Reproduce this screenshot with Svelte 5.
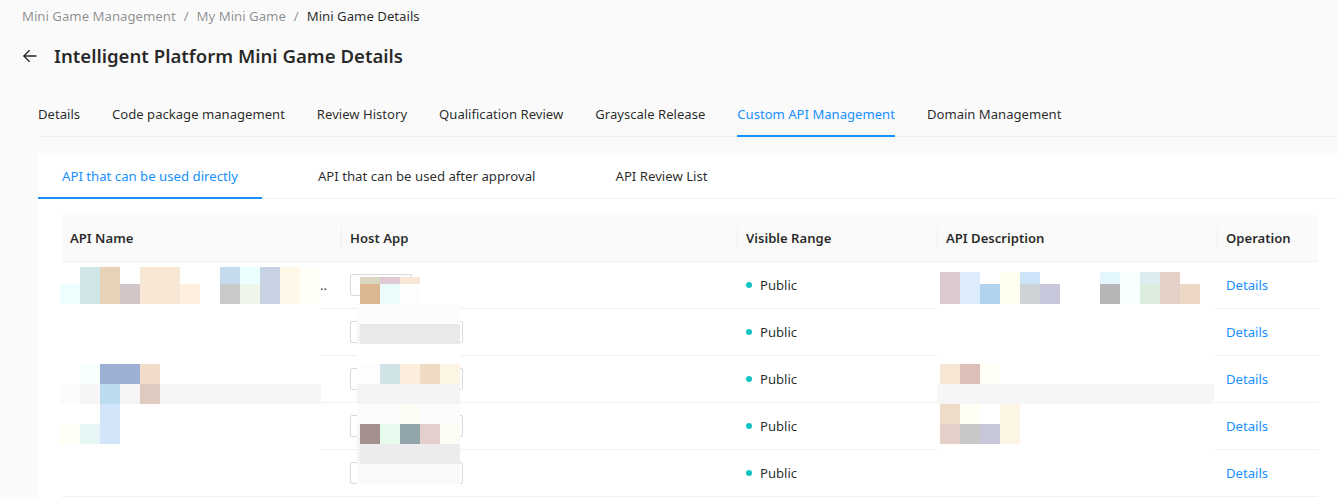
<script lang="ts">
  const crumbs = ["Mini Game Management", "My Mini Game"];
  const pageTabs = [
    "Details",
    "Code package management",
    "Review History",
    "Qualification Review",
    "Grayscale Release",
    "Custom API Management",
    "Domain Management",
  ];
  const apiTabs = [
    "API that can be used directly",
    "API that can be used after approval",
    "API Review List",
  ];
  const columns = ["API Name", "Host App", "Visible Range", "API Description", "Operation"];
  // host tag widths, the names themselves are blurred in the source
  const rows = [
    { id: 1, name: "...", tag: 62 },
    { id: 2, name: "", tag: 113 },
    { id: 3, name: "", tag: 113 },
    { id: 4, name: "", tag: 113 },
    { id: 5, name: "", tag: 113 },
  ];

  // x, y, w, h, fill: page coordinates of the pixelated privacy mask
  type Patch = [number, number, number, number, string];
  const mask: Patch[] = [
    // white sheets under the mosaics
    [60, 267, 261, 223, "#fff"],
    [357, 304, 103, 180, "#fff"],
    [937, 267, 277, 223, "#fff"],
    // name column
    [80, 267, 20, 37, "#d0e5e8"],
    [100, 267, 20, 37, "#e6d2b9"],
    [140, 267, 40, 37, "#f8e7d4"],
    [220, 267, 20, 17, "#c6daee"],
    [240, 267, 20, 17, "#ecffff"],
    [260, 267, 20, 37, "#c7d3e5"],
    [280, 267, 20, 37, "#fff7e8"],
    [300, 267, 20, 37, "#fffff6"],
    [60, 284, 20, 20, "#eeffff"],
    [120, 284, 20, 20, "#d1c5c6"],
    [180, 284, 20, 20, "#ffefdf"],
    [220, 284, 20, 20, "#c8caca"],
    [240, 284, 20, 20, "#eef6ea"],
    [80, 364, 20, 20, "#f8ffff"],
    [100, 364, 40, 20, "#9dafd5"],
    [140, 364, 20, 20, "#f0dcc8"],
    [60, 384, 261, 20, "#f6f6f6"],
    [60, 384, 20, 20, "#fbfbfb"],
    [100, 384, 20, 20, "#bbdcef"],
    [140, 384, 20, 20, "#dfcac0"],
    [100, 404, 20, 40, "#d2e5f9"],
    [60, 424, 20, 20, "#fffff6"],
    [80, 424, 20, 20, "#e5f6f5"],
    // host column
    [360, 277, 20, 7, "#dad7bf"],
    [380, 277, 20, 7, "#dfcad3"],
    [400, 277, 20, 7, "#f8e6d6"],
    [360, 284, 20, 20, "#dcb78f"],
    [380, 284, 20, 20, "#ecfbfb"],
    [400, 284, 20, 20, "#fdfdfd"],
    [357, 304, 103, 20, "#fcfcfc"],
    [357, 324, 3, 20, "#f5f5f5"],
    [360, 324, 100, 20, "#e9e9e9"],
    [360, 364, 20, 20, "#fdfdfd"],
    [380, 364, 20, 20, "#d0e3e6"],
    [400, 364, 20, 20, "#fbeedd"],
    [420, 364, 20, 20, "#efdac3"],
    [440, 364, 20, 20, "#fdf5e3"],
    [357, 384, 103, 20, "#f4f4f4"],
    [357, 404, 103, 20, "#fcfcfc"],
    [400, 404, 20, 20, "#fcfcf4"],
    [357, 424, 3, 20, "#f5f5f5"],
    [360, 424, 20, 20, "#a4918e"],
    [380, 424, 20, 20, "#e6fbee"],
    [400, 424, 20, 20, "#92a4ac"],
    [420, 424, 20, 20, "#e4cfcd"],
    [440, 424, 20, 20, "#fcfcf4"],
    [357, 444, 3, 20, "#f3f3f3"],
    [360, 444, 100, 20, "#ececec"],
    [357, 464, 103, 20, "#fafafa"],
    // description column
    [940, 272, 20, 32, "#dcc8cf"],
    [960, 272, 20, 32, "#dcecfd"],
    [980, 284, 20, 20, "#b2d3ee"],
    [1000, 272, 20, 32, "#fffff0"],
    [1020, 272, 20, 12, "#cde3f8"],
    [1020, 284, 20, 20, "#d0d3d5"],
    [1040, 284, 20, 20, "#c6c7da"],
    [1100, 272, 20, 12, "#e3f5fd"],
    [1100, 284, 20, 20, "#b6b6b6"],
    [1120, 272, 20, 32, "#f7ffff"],
    [1140, 272, 20, 12, "#dcedf0"],
    [1140, 284, 20, 20, "#dcecdf"],
    [1160, 272, 20, 32, "#e5d0c7"],
    [1180, 284, 20, 20, "#ecd8c5"],
    [940, 364, 20, 20, "#f8e6d4"],
    [960, 364, 20, 20, "#dcc0b8"],
    [980, 364, 20, 20, "#fffff6"],
    [937, 384, 277, 20, "#f6f6f6"],
    [940, 404, 20, 20, "#eedcc9"],
    [960, 404, 20, 20, "#fffff4"],
    [1000, 404, 20, 40, "#fdf5e4"],
    [940, 424, 20, 20, "#e4d0c9"],
    [960, 424, 20, 20, "#c8c8c8"],
    [980, 424, 20, 20, "#c7c7da"],
  ];
</script>

<div class="page">
  <nav class="crumbs">
    {#each crumbs as c}
      <span>{c}</span><span class="sep">/</span>
    {/each}
    <span class="current">Mini Game Details</span>
  </nav>

  <header class="title">
    <svg class="back" width="16" height="16" viewBox="0 0 16 16" fill="none" stroke="currentColor" stroke-width="1.3">
      <path d="M14.5 8H1.8M7.6 2.2 1.8 8l5.8 5.8" />
    </svg>
    <h1>Intelligent Platform Mini Game Details</h1>
  </header>

  <div class="page-tabs">
    {#each pageTabs as t, i}
      <div class="page-tab" class:active={i === 5}>{t}</div>
    {/each}
  </div>

  <section class="card">
    <div class="api-tabs">
      {#each apiTabs as t, i}
        <div class="api-tab" class:active={i === 0}>{t}</div>
      {/each}
    </div>

    <table>
      <colgroup>
        <col style="width:280px" />
        <col style="width:396px" />
        <col style="width:200px" />
        <col style="width:280px" />
        <col style="width:100px" />
      </colgroup>
      <thead>
        <tr>
          {#each columns as c}
            <th>{c}</th>
          {/each}
        </tr>
      </thead>
      <tbody>
        {#each rows as r (r.id)}
          <tr>
            <td class="name">{r.name}</td>
            <td><span class="tag" style="width:{r.tag}px"></span></td>
            <td><span class="dot"></span>Public</td>
            <td></td>
            <td class="link">Details</td>
          </tr>
        {/each}
      </tbody>
    </table>

    <svg class="mask" width="1300" height="346" viewBox="38 153 1300 346" shape-rendering="crispEdges">
      {#each mask as [x, y, w, h, fill]}
        <rect {x} {y} width={w} height={h} {fill} />
      {/each}
    </svg>
  </section>
</div>

<style>
  :global(body) {
    background: #fafafa;
    overflow: hidden;
  }
  .page {
    height: 499px;
    overflow: hidden;
    font-family: "Noto Sans", "Open Sans", sans-serif;
    font-size: 13.1px;
    line-height: 22px;
    color: rgba(0, 0, 0, 0.85);
  }
  .crumbs {
    display: flex;
    padding: 5px 0 0 22px;
    font-size: 13.2px;
    color: rgba(0, 0, 0, 0.45);
  }
  .sep {
    margin: 0 8px;
  }
  .current {
    color: rgba(0, 0, 0, 0.85);
  }
  .title {
    display: flex;
    align-items: center;
    gap: 16px;
    margin: 15px 0 0 22px;
    height: 28px;
  }
  .back {
    flex-shrink: 0;
  }
  h1 {
    margin: 0;
    font-size: 18.6px;
    line-height: 28px;
    font-weight: 600;
  }
  .page-tabs {
    display: flex;
    gap: 32px;
    margin: 21px 0 0 38px;
    border-bottom: 1px solid #f0f0f0;
  }
  .page-tab {
    padding: 12px 0 11px;
    position: relative;
  }
  .active {
    color: #1890ff;
  }
  .page-tab.active::after,
  .api-tab.active::after {
    content: "";
    position: absolute;
    left: 0;
    right: 0;
    bottom: -1px;
    height: 2px;
    background: #1890ff;
  }
  .card {
    position: relative;
    margin: 16px 0 0 38px;
    height: 346px;
    background: #fff;
  }
  .api-tabs {
    display: flex;
    gap: 32px;
    height: 45px;
    border-bottom: 1px solid #f0f0f0;
  }
  .api-tab {
    position: relative;
    padding: 12px 24px 0;
    font-size: 13.2px;
  }
  table {
    margin: 16px 0 0 24px;
    width: 1256px;
    table-layout: fixed;
    border-collapse: separate;
    border-spacing: 0;
  }
  th {
    position: relative;
    height: 47px;
    padding: 0 8px;
    box-sizing: border-box;
    text-align: left;
    font-weight: 600;
    background: #fafafa;
    border-bottom: 1px solid #f0f0f0;
  }
  th:not(:last-child)::after {
    content: "";
    position: absolute;
    right: 0;
    top: 12px;
    width: 1px;
    height: 22px;
    background: #f0f0f0;
  }
  td {
    height: 47px;
    padding: 0 8px;
    box-sizing: border-box;
    border-bottom: 1px solid #f0f0f0;
  }
  td.name {
    text-align: right;
    padding-right: 15px;
  }
  .tag {
    display: block;
    height: 22px;
    box-sizing: border-box;
    border: 1px solid #d9d9d9;
    border-radius: 2px;
  }
  .dot {
    display: inline-block;
    width: 6px;
    height: 6px;
    margin-right: 8px;
    border-radius: 50%;
    background: #13c2c2;
    vertical-align: middle;
    position: relative;
    top: -1px;
  }
  .link {
    color: #1890ff;
  }
  .mask {
    position: absolute;
    left: 0;
    top: 0;
    pointer-events: none;
  }
</style>
